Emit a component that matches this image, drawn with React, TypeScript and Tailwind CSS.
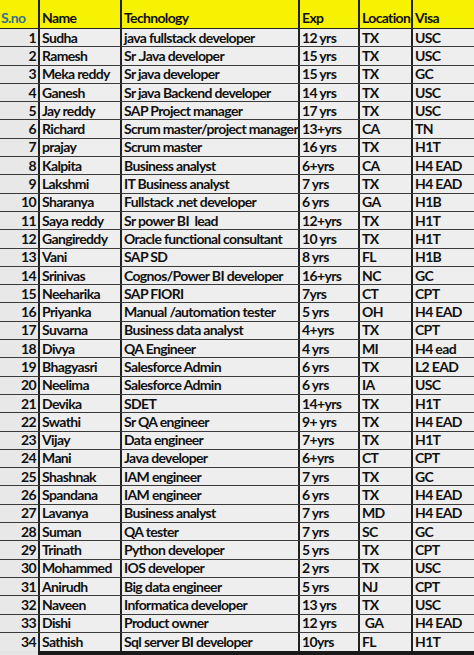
import React from "react";

const rows: [string, string, string, string, string, string][] = [
  ["1", "Sudha", "java fullstack developer", "12 yrs", "TX", "USC"],
  ["2", "Ramesh", "Sr .Java developer", "15 yrs", "TX", "USC"],
  ["3", "Meka reddy", "Sr java developer", "15 yrs", "TX", "GC"],
  ["4", "Ganesh", "Sr java Backend developer", "14 yrs", "TX", "USC"],
  ["5", "Jay reddy", "SAP Project manager", "17 yrs", "TX", "USC"],
  ["6", "Richard", "Scrum master/project manager", "13+yrs", "CA", "TN"],
  ["7", "prajay", "Scrum master", "16 yrs", "TX", "H1T"],
  ["8", "Kalpita", "Business analyst", "6+yrs", "CA", "H4 EAD"],
  ["9", "Lakshmi", "IT Business analyst", "7 yrs", "TX", "H4 EAD"],
  ["10", "Sharanya", "Fullstack .net developer", "6 yrs", "GA", "H1B"],
  ["11", "Saya reddy", "Sr power BI  lead", "12+yrs", "TX", "H1T"],
  ["12", "Gangireddy", "Oracle functional consultant", "10 yrs", "TX", "H1T"],
  ["13", "Vani", "SAP SD", "8 yrs", "FL", "H1B"],
  ["14", "Srinivas", "Cognos/Power BI developer", "16+yrs", "NC", "GC"],
  ["15", "Neeharika", "SAP FIORI", "7yrs", "CT", "CPT"],
  ["16", "Priyanka", "Manual /automation tester", "5 yrs", "OH", "H4 EAD"],
  ["17", "Suvarna", "Business data analyst", "4+yrs", "TX", "CPT"],
  ["18", "Divya", "QA Engineer", "4 yrs", "MI", "H4 ead"],
  ["19", "Bhagyasri", "Salesforce Admin", "6 yrs", "TX", "L2 EAD"],
  ["20", "Neelima", "Salesforce Admin", "6 yrs", "IA", "USC"],
  ["21", "Devika", "SDET", "14+yrs", "TX", "H1T"],
  ["22", "Swathi", "Sr QA engineer", "9+ yrs", "TX", "H4 EAD"],
  ["23", "Vijay", "Data engineer", "7+yrs", "TX", "H1T"],
  ["24", "Mani", "Java developer", "6+yrs", "CT", "CPT"],
  ["25", "Shashnak", "IAM engineer", "7 yrs", "TX", "GC"],
  ["26", "Spandana", "IAM engineer", "6 yrs", "TX", "H4 EAD"],
  ["27", "Lavanya", "Business analyst", "7 yrs", "MD", "H4 EAD"],
  ["28", "Suman", "QA tester", "7 yrs", "SC", "GC"],
  ["29", "Trinath", "Python developer", "5 yrs", "TX", "CPT"],
  ["30", "Mohammed", "IOS developer", "2 yrs", "TX", "USC"],
  ["31", "Anirudh", "Big data engineer", "5 yrs", "NJ", "CPT"],
  ["32", "Naveen", "Informatica developer", "13 yrs", "TX", "USC"],
  ["33", "Dishi", "Product owner", "12 yrs", " GA", "H4 EAD"],
  ["34", "Sathish", "Sql server BI developer", "10yrs", "FL", "H1T"],
];

const cols = "grid grid-cols-[38px_82px_178px_60px_53px_63px]";
const hcell = "border-l-2 border-[#222] pl-[2px] flex items-end pb-[3px] whitespace-nowrap";
const cell = "border-l-2 border-[#222] pl-[2px] flex items-center whitespace-pre";

export default function App() {
  return (
    <div
      className="w-[474px] h-[655px] overflow-hidden bg-[#eeeeee] text-[#111] font-bold text-[14px] tracking-[-0.65px] leading-none"
      style={{ fontFamily: "Lato, 'Open Sans', sans-serif" }}
    >
      <div className={`${cols} h-[29px] bg-[#f7f200] border-b-[1.5px] border-[#222]`}>
        <div className="pl-[1px] flex items-end pb-[3px] text-[#3b6f95]">S.no</div>
        <div className={hcell}>Name</div>
        <div className={hcell}>Technology</div>
        <div className={hcell}>Exp</div>
        <div className={hcell}>Location</div>
        <div className={hcell}>Visa</div>
      </div>
      {rows.map((r, i) => (
        <div
          key={i}
          className={`${cols} h-[18.3px] ${i === rows.length - 1 ? "" : "border-b-[1.5px] border-[#3a3a3a]"}`}
        >
          <div className="bg-[#e8e8e8] pr-[2px] flex items-center justify-end">{r[0]}</div>
          <div className={cell}>{r[1]}</div>
          <div className={cell}>{r[2]}</div>
          <div className={cell}>{r[3]}</div>
          <div className={cell}>{r[4]}</div>
          <div className={cell}>{r[5]}</div>
        </div>
      ))}
      <div className="flex h-[4px]">
        <div className="w-[38px] bg-[#e4e4e4]" />
        <div className="flex-1 bg-[#1a1a1a]" />
      </div>
    </div>
  );
}
